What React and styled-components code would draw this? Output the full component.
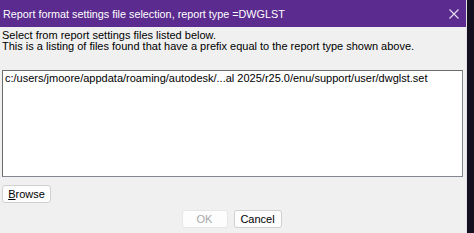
import React from "react";
import styled, { createGlobalStyle } from "styled-components";

const Global = createGlobalStyle`
  html, body {
    margin: 0;
    padding: 0;
    background: #15101f;
    overflow: hidden;
  }
`;

const Screen = styled.div`
  width: 474px;
  height: 233px;
  display: flex;
  background: #15101f;
`;

const Dialog = styled.div`
  width: 467px;
  height: 233px;
  display: flex;
  flex-direction: column;
  background: #f0f0f0;
  border-right: 1px solid #e4e0ea;
  box-sizing: border-box;
`;

const TitleBar = styled.div`
  height: 27px;
  flex: none;
  display: flex;
  align-items: center;
  justify-content: space-between;
  background: #5b2b8f;
  color: #fff;
  padding: 0 7px 0 3px;
  font-family: "Liberation Sans", Arial, sans-serif;
  font-size: 10.8px;
`;

const Close = styled.span`
  display: flex;
  align-items: center;
`;

const Body = styled.div`
  flex: 1;
  display: flex;
  flex-direction: column;
  padding: 3px 3px 0 2px;
  font-family: "Liberation Sans", Arial, sans-serif;
  font-size: 11px;
  color: #000;
`;

const Line = styled.div`
  height: 11px;
  line-height: 11px;
`;

const ListBox = styled.div`
  margin-top: 18px;
  height: 107px;
  width: 461px;
  flex: none;
  box-sizing: border-box;
  background: #fff;
  border: 1px solid #828790;
  border-top-color: #6d6d6d;
  border-left-color: #6d6d6d;
  padding: 1px 2px;
`;

const Item = styled.div`
  line-height: 13px;
`;

const Button = styled.button`
  font-family: "Liberation Sans", Arial, sans-serif;
  font-size: 11px;
  height: 18px;
  width: ${(p) => p.w}px;
  padding: 0;
  background: #fdfdfd;
  border: 1px solid ${(p) => (p.disabled ? "#e6e6e6" : "#d0d0d0")};
  border-radius: 3px;
  color: ${(p) => (p.disabled ? "#a8a8a8" : "#000")};
`;

const BrowseRow = styled.div`
  margin-top: 8px;
  display: flex;
`;

const ButtonRow = styled.div`
  margin-top: 7px;
  display: flex;
  justify-content: center;
  gap: 6px;
  padding-right: 2px;
`;

export default function App() {
  return (
    <>
      <Global />
      <Screen>
        <Dialog>
          <TitleBar>
            <span>Report format settings file selection, report type =DWGLST</span>
            <Close>
              <svg width="10" height="10" viewBox="0 0 10 10">
                <path d="M0.5 0.5 L9.5 9.5 M9.5 0.5 L0.5 9.5" stroke="#e8e0f0" strokeWidth="1.1" />
              </svg>
            </Close>
          </TitleBar>
          <Body>
            <Line>Select from report settings files listed below.</Line>
            <Line>This is a listing of files found that have a prefix equal to the report type shown above.</Line>
            <ListBox>
              <Item>c:/users/jmoore/appdata/roaming/autodesk/...al 2025/r25.0/enu/support/user/dwglst.set</Item>
            </ListBox>
            <BrowseRow>
              <Button w={49}>
                <u>B</u>rowse
              </Button>
            </BrowseRow>
            <ButtonRow>
              <Button w={46} disabled>
                OK
              </Button>
              <Button w={48}>Cancel</Button>
            </ButtonRow>
          </Body>
        </Dialog>
      </Screen>
    </>
  );
}
